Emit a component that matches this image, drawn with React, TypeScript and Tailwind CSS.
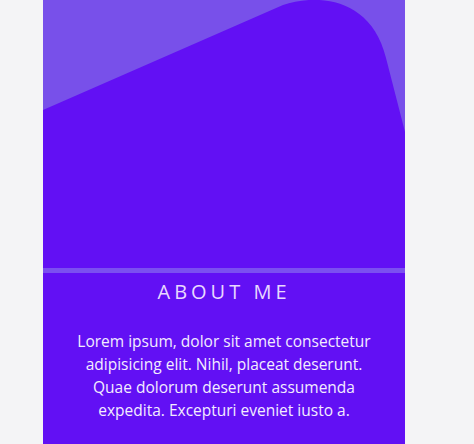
export default function App() {
  return (
    <div className="min-h-screen h-[444px] overflow-hidden bg-[#f4f4f6]">
      <div className="ml-[43px] w-[362px] h-[444px] bg-[#6210f4] flex flex-col">
        <div className="h-[268px] bg-[#7850ea]">
          <svg viewBox="0 0 362 268" className="w-full h-full block" preserveAspectRatio="none">
            <path
              d="M0 110 L240 5 C272 -6 328 -4 343 58 L362 132 V268 H0 Z"
              fill="#6210f4"
            />
          </svg>
        </div>
        <div className="h-[5px] bg-[#7b4ff0]" />
        <h2
          className="mt-[4px] text-center text-[20px] leading-[30px] tracking-[0.2em] text-[#e8d8ff] font-medium"
          style={{ fontFamily: '"Open Sans", sans-serif' }}
        >
          ABOUT ME
        </h2>
        <p
          className="mt-[23px] px-[26px] text-center text-[15.5px] leading-[23px] text-[#f3ecff] font-medium"
          style={{ fontFamily: '"Open Sans", sans-serif' }}
        >
          Lorem ipsum, dolor sit amet consectetur adipisicing elit. Nihil, placeat deserunt. Quae dolorum deserunt assumenda expedita. Excepturi eveniet iusto a.
        </p>
      </div>
    </div>
  );
}
